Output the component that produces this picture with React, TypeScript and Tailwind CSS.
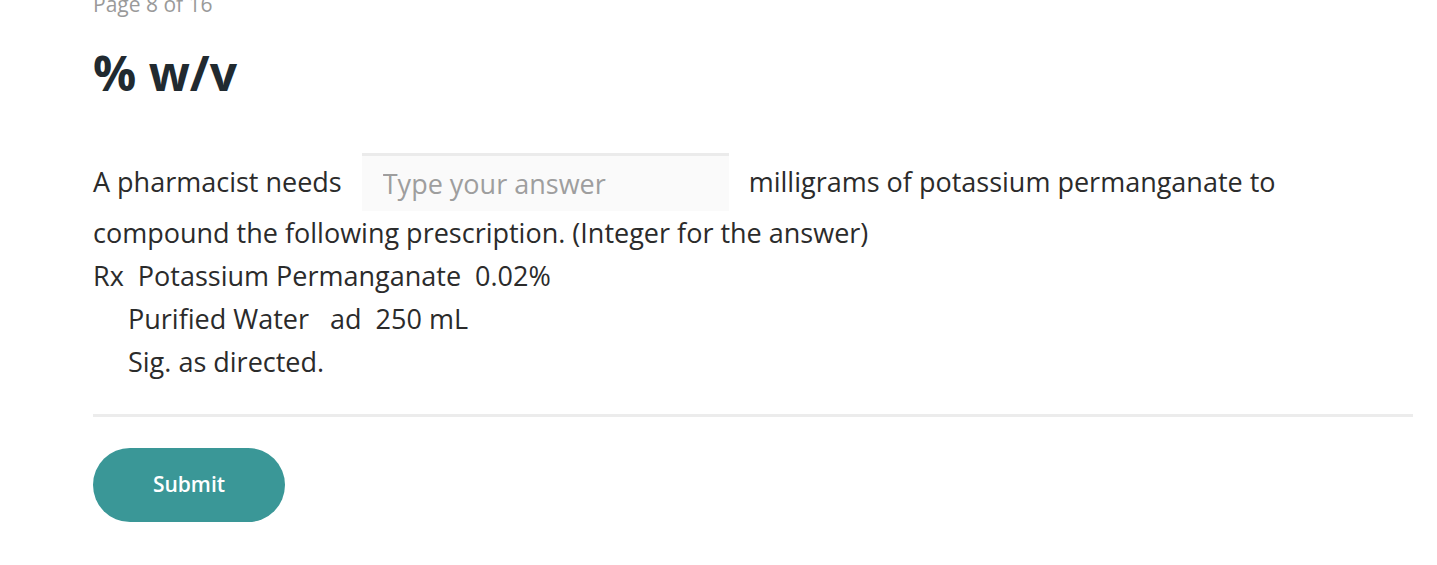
import React from 'react';

const App: React.FC = () => {
  return (
    <div
      className="w-full h-[565px] overflow-hidden bg-white pl-[93px] pr-[24px] text-[#2b2b2b]"
      style={{ fontFamily: '"Open Sans", "Noto Sans", sans-serif' }}
    >
      {/* Page counter, cut off at the top */}
      <div className="-mt-[11px] text-[21px] leading-[30px] text-[#9a9a9a]">Page 8 of 16</div>

      <h1 className="mt-[24px] text-[48px] leading-[60px] font-bold text-[#212a30]">% w/v</h1>

      {/* Question */}
      <div className="mt-[50px] text-[27px]">
        <div className="flex items-center h-[58px]">
          <span>A pharmacist needs</span>
          <input
            type="text"
            placeholder="Type your answer"
            className="mx-[20px] h-[58px] w-[367px] border-t-[3px] border-[#ebebeb] bg-[#fafafa] pl-[21px] text-[27px] placeholder:text-[#9e9e9e] outline-none"
          />
          <span>milligrams of potassium permanganate to</span>
        </div>
        <div className="leading-[43px] whitespace-pre">
          <div>compound the following prescription. (Integer for the answer)</div>
          <div>Rx  Potassium Permanganate  0.02%</div>
          <div className="pl-[35px]">Purified Water   ad  250 mL</div>
          <div className="pl-[35px]">Sig. as directed.</div>
        </div>
      </div>

      <div className="mt-[31px] h-[3px] bg-[#ececec]" />

      <button className="mt-[31px] h-[74px] w-[192px] rounded-full bg-[#3a9797] text-[21px] font-semibold text-white">
        Submit
      </button>
    </div>
  );
};

export default App;
